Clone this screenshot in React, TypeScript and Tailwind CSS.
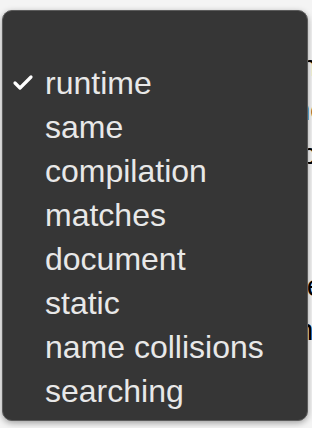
import { Check } from "lucide-react";

const ITEMS = [
  "runtime",
  "same",
  "compilation",
  "matches",
  "document",
  "static",
  "name collisions",
  "searching",
];

const BEHIND = [
  "lint stops collisions at",
  "ed with the same A/B names",
  "in the compilation of module",
  "d to the document map when",
  "which is a static link in the",
  "er name collisions and the",
  "name mangling and the type",
  "tooling for searching the",
  "to the end of the file",
];

export default function App() {
  return (
    <div className="relative w-[312px] h-[428px] overflow-hidden bg-[#f4f4f4]"
      style={{ fontFamily: '"Liberation Sans", Arial, sans-serif' }}>

      {/* page text sitting behind the popup */}
      <div aria-hidden className="flex flex-col mt-[0px] -ml-[60px] text-[30px] leading-[44px] text-black whitespace-nowrap select-none">
        {BEHIND.map(line => (
          <div key={line} className="pl-[70px]">{line}</div>
        ))}
      </div>

      {/* popup menu */}
      <div className="absolute left-[2px] top-[10px] w-[306px] h-[411px] rounded-[10px] border border-[#5c5c5c] bg-[#363636] shadow-[0_2px_6px_rgba(0,0,0,0.35)] pt-[50px] pb-2">
        {ITEMS.map((item, i) => (
          <div key={item} className="flex items-center h-[44px] text-[32px] text-[#e8e8e8]">
            <div className="w-[42px] flex justify-end pr-[10px]">
              {i === 0 && <Check size={24} strokeWidth={3.2} className="text-white" />}
            </div>
            <span>{item}</span>
          </div>
        ))}
      </div>
    </div>
  );
}
